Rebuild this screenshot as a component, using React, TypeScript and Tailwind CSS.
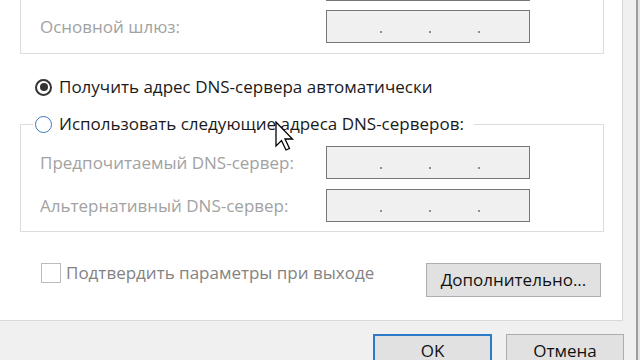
import React from 'react';

const font = { fontFamily: '"Open Sans", "Noto Sans", sans-serif' };

function IpBox() {
  return (
    <div className="w-[204px] h-[33px] border border-[#767676] bg-[#f0f0f0] flex pl-[53px] pt-[20px] gap-[47px]">
      <span className="w-[2px] h-[2px] bg-[#8f8f8f]" />
      <span className="w-[2px] h-[2px] bg-[#8f8f8f]" />
      <span className="w-[2px] h-[2px] bg-[#8f8f8f]" />
    </div>
  );
}

function FieldRow({ label }: { label: string }) {
  return (
    <div className="flex items-center h-[33px] pl-[19px]">
      <div className="w-[286px] text-[17px] leading-[24px] text-[#a2a2a2]">{label}</div>
      <IpBox />
    </div>
  );
}

function Radio({ checked, hover }: { checked?: boolean; hover?: boolean }) {
  return (
    <div
      className={
        'w-[17px] h-[17px] rounded-full bg-white flex items-center justify-center shrink-0 ' +
        (hover ? 'border-[1.5px] border-[#3b78b5]' : 'border-2 border-[#333333]')
      }
    >
      {checked && <div className="w-[8px] h-[8px] rounded-full bg-[#333333]" />}
    </div>
  );
}

function Cursor() {
  return (
    <svg className="absolute left-[275px] top-[121px]" width="20" height="31" viewBox="0 0 20 31">
      <path
        d="M1 1 L1 25 L6.5 19.5 L11 29 L14.5 27.5 L10 18 L17.5 18 Z"
        fill="#ffffff"
        stroke="#000000"
        strokeWidth="1.3"
        strokeLinejoin="miter"
      />
    </svg>
  );
}

export default function App() {
  return (
    <div className="relative w-[640px] h-[360px] overflow-hidden bg-[#f0f0f0] flex" style={font}>
      <div className="w-[636px] flex flex-col">
        {/* white tab page */}
        <div className="shrink-0 w-[623px] h-[321px] bg-white border-r border-b border-[#d9d9d9] flex flex-col">
          {/* IP address group (cropped at top) */}
          <div className="mt-[-43px] ml-[20px] w-[584px] h-[97px] border border-[#dcdcdc] pt-[10px] flex flex-col gap-[9px]">
            <FieldRow label="" />
            <FieldRow label="Основной шлюз:" />
          </div>

          <div className="mt-[21px] h-[24px] pl-[35px] flex items-center gap-[7px]">
            <Radio checked />
            <span className="text-[17px] leading-[24px] text-[#1a1a1a]">Получить адрес DNS-сервера автоматически</span>
          </div>

          {/* DNS group */}
          <div className="relative mt-[25px] ml-[20px] w-[584px] h-[108px] border border-[#dcdcdc] pt-[21px] flex flex-col gap-[10px]">
            <div className="absolute left-[12px] top-[-13px] h-[24px] bg-white pl-[2px] pr-[10px] flex items-center gap-[7px]">
              <Radio hover />
              <span className="text-[17px] leading-[24px] text-[#1a1a1a]">Использовать следующие адреса DNS-серверов:</span>
            </div>
            <FieldRow label="Предпочитаемый DNS-сервер:" />
            <FieldRow label="Альтернативный DNS-сервер:" />
          </div>

          <div className="mt-[31px] pl-[41px] pr-[21px] flex items-start">
            <div className="flex items-center gap-[5px] h-[20px]">
              <div className="w-[20px] h-[20px] border border-[#bcbcbc] bg-white" />
              <span className="text-[17px] leading-[24px] text-[#838383]">Подтвердить параметры при выходе</span>
            </div>
            <button className="ml-auto w-[175px] h-[34px] border border-[#adadad] bg-[#e1e1e1] text-[17px] text-[#111111]">
              Дополнительно...
            </button>
          </div>
        </div>

        {/* dialog buttons (cut at the bottom edge) */}
        <div className="flex justify-end gap-[14px] pt-[13px] pr-[12px]">
          <button className="shrink-0 w-[119px] h-[34px] border-2 border-[#2b7bc6] bg-[#e1e1e1] text-[17px] leading-[14px] text-[#111111] flex items-start justify-center pt-[8px]">
            OK
          </button>
          <button className="shrink-0 w-[118px] h-[34px] border border-[#adadad] bg-[#e1e1e1] text-[17px] leading-[14px] text-[#111111] flex items-start justify-center pt-[9px]">
            Отмена
          </button>
        </div>
      </div>
      <div className="w-[2px] h-full bg-[#9e9e9e]" />
      <div className="w-[2px] h-full bg-[#e3e3e3]" />

      <Cursor />
    </div>
  );
}
